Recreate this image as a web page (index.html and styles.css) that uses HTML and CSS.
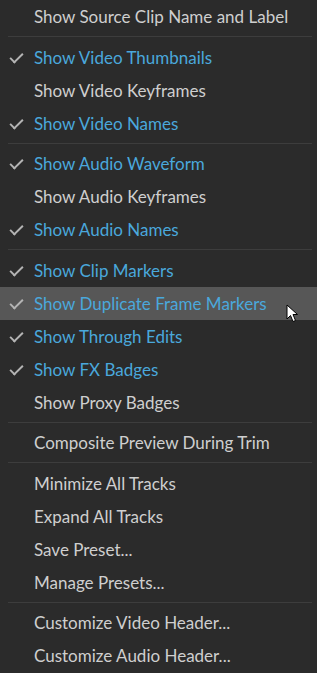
FILE: index.html
```html
<!DOCTYPE html>
<html lang="en">
<head>
    <meta charset="UTF-8">
    <meta name="viewport" content="width=device-width, initial-scale=1.0">
    <title>Timeline Display Settings</title>
    <link rel="stylesheet" href="styles.css">
</head>
<body>
    <ul class="menu">
        <li class="item">Show Source Clip Name and Label</li>
        <li class="sep"></li>
        <li class="item checked">Show Video Thumbnails</li>
        <li class="item">Show Video Keyframes</li>
        <li class="item checked">Show Video Names</li>
        <li class="sep"></li>
        <li class="item checked">Show Audio Waveform</li>
        <li class="item">Show Audio Keyframes</li>
        <li class="item checked">Show Audio Names</li>
        <li class="sep"></li>
        <li class="item checked">Show Clip Markers</li>
        <li class="item checked hover">Show Duplicate Frame Markers
            <svg class="cursor" width="13" height="19" viewBox="0 0 13 19">
                <path d="M1 1 L1 15 L4.5 11.5 L7 17.5 L9.5 16.5 L7 10.5 L11.5 10.5 Z" fill="#fff" stroke="#000" stroke-width="1"/>
            </svg>
        </li>
        <li class="item checked">Show Through Edits</li>
        <li class="item checked">Show FX Badges</li>
        <li class="item">Show Proxy Badges</li>
        <li class="sep"></li>
        <li class="item">Composite Preview During Trim</li>
        <li class="sep"></li>
        <li class="item">Minimize All Tracks</li>
        <li class="item">Expand All Tracks</li>
        <li class="item">Save Preset...</li>
        <li class="item">Manage Presets...</li>
        <li class="sep"></li>
        <li class="item">Customize Video Header...</li>
        <li class="item">Customize Audio Header...</li>
    </ul>
</body>
</html>
```

FILE: styles.css
```css
body {
    margin: 0;
    padding: 0;
    background-color: #2b2b2b;
    font-family: Lato, "Open Sans", sans-serif;
}
.menu {
    list-style: none;
    margin: 0;
    padding: 0;
}
.item {
    position: relative;
    height: 33px;
    line-height: 33px;
    padding-left: 34px;
    font-size: 17px;
    color: #cfcfcf;
    white-space: nowrap;
}
.item.checked {
    color: #4aa8dc;
}
.item.checked::before {
    content: "";
    position: absolute;
    left: 10px;
    top: 12px;
    width: 11px;
    height: 5px;
    border-left: 2.5px solid #b4b4b4;
    border-bottom: 2.5px solid #b4b4b4;
    transform: rotate(-45deg);
}
.item.hover {
    background-color: #575757;
}
.cursor {
    position: absolute;
    left: 286px;
    top: 17px;
}
.sep {
    height: 7.5px;
    display: flex;
    align-items: center;
    padding: 0 5px 0 8px;
}
.sep::after {
    content: "";
    flex: 1;
    height: 1px;
    background-color: #3d3d3d;
}
```
